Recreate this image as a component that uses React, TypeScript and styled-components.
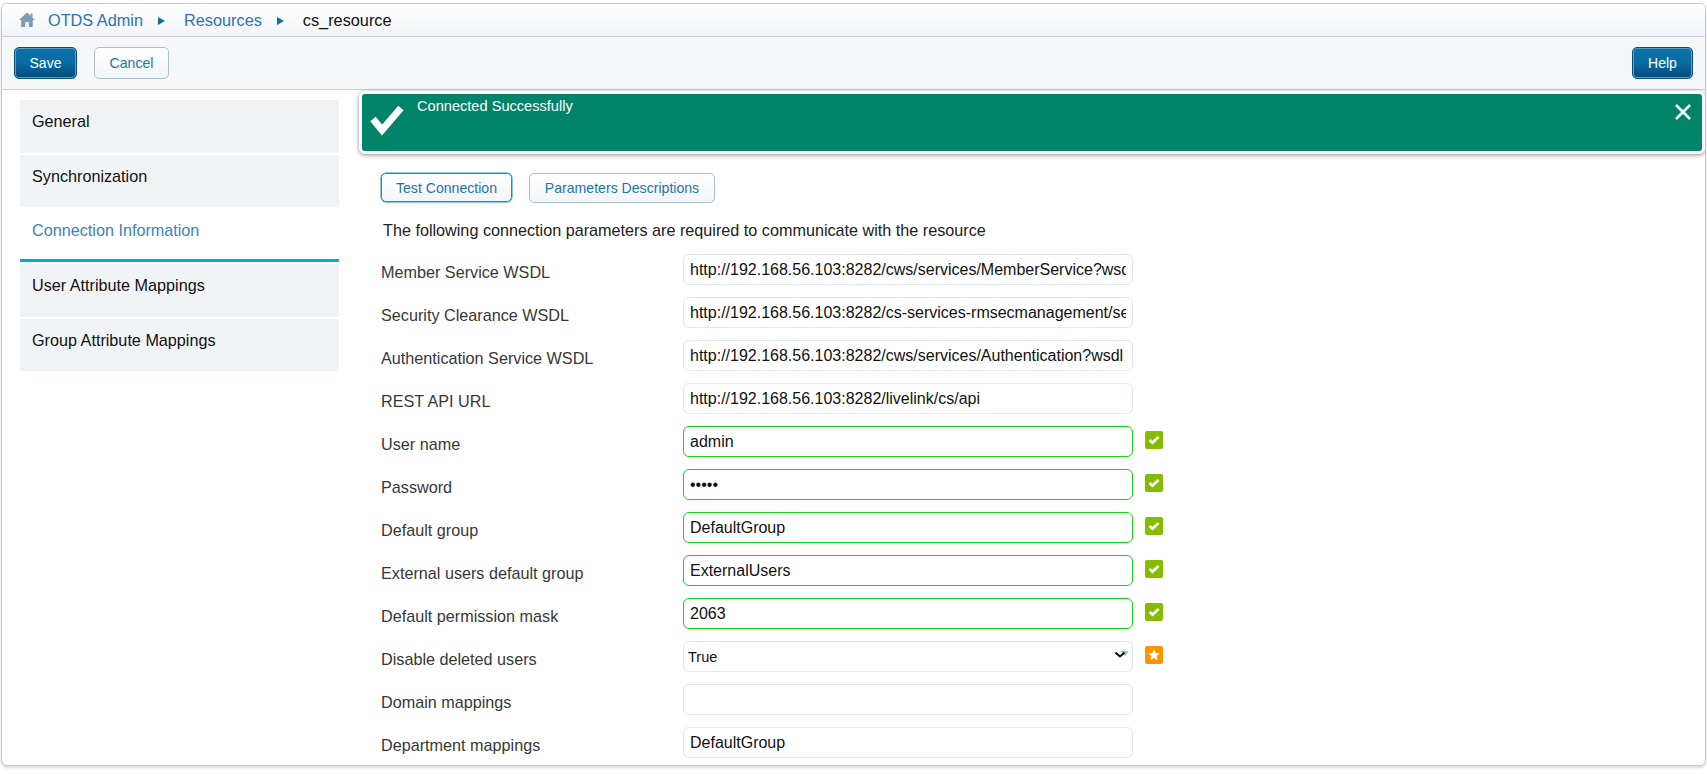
import React from "react";
import styled, {createGlobalStyle} from "styled-components";

const GlobalStyle = createGlobalStyle`
  html, body {
    margin: 0;
    padding: 0;
    height: 100%;
    background: #ffffff;
    font-family: "Liberation Sans", Arial, sans-serif;
  }
  * {
    box-sizing: border-box;
  }
`;

const Frame = styled.div`
  overflow: hidden;
  height: 763px;
  margin: 3px 1px 0 1px;

  background: #ffffff;
  border: 1px solid #bccbd6;
  border-radius: 6px;
  box-shadow: 0 2px 3px rgba(120, 140, 160, .3);
`;
const Breadcrumb = styled.div`
  display: flex;
  align-items: center;
  height: 33px;
  padding: 0 0 0 17px;

  font-size: 16.3px;

  background: linear-gradient(#ffffff, #f1f4f7);
  border-bottom: 1px solid #c6d3dc;
`;
const HomeIcon = styled.svg`
  flex: none;
  margin: -2px 13px 0 0;
`;
const Crumb = styled.span<{ $current?: boolean }>`
  color: ${p => p.$current ? "#111111" : "#2e73b0"};
`;
const Sep = styled.span`
  width: 0;
  height: 0;
  margin: 1px 19px 0 15px;

  border-left: 7px solid #0f6ea6;
  border-top: 4px solid transparent;
  border-bottom: 4px solid transparent;
`;
const Toolbar = styled.div`
  display: flex;
  align-items: center;
  justify-content: space-between;
  height: 53px;
  padding: 0 12px 0 12px;

  background: #f5f7f9;
  border-bottom: 1px solid #c6d3dc;
`;
const ToolGroup = styled.div`
  display: flex;
  gap: 17px;
`;
const PrimaryButton = styled.button<{ $width: number }>`
  width: ${p => p.$width}px;
  height: 32px;
  padding: 0;

  color: #ffffff;
  font-family: inherit;
  font-size: 14px;

  background: linear-gradient(#0a72ab 0%, #0a6ba3 50%, #024a78 100%);
  border: 1px solid #0b4f78;
  border-radius: 5px;
  box-shadow: inset 0 0 0 1px #5a9fc6;
`;
const GhostButton = styled.button<{ $width: number; $focused?: boolean; $tall?: boolean }>`
  width: ${p => p.$width}px;
  height: ${p => p.$tall ? "32px" : p.$focused ? "29px" : "30px"};
  padding: 0;

  color: #1f74ad;
  font-family: inherit;
  font-size: 14.1px;

  background: linear-gradient(#ffffff, #f2f5f8);
  border: 1px solid ${p => p.$focused ? "#1593cc" : "#a9c0d0"};
  border-radius: 5px;
  box-shadow: ${p => p.$focused ? "0 0 0 .5px #1593cc" : "none"};
`;
const Body = styled.div`
  display: flex;
  align-items: flex-start;
`;
const Nav = styled.nav`
  display: flex;
  flex-direction: column;
  flex: none;
  gap: 2px;
  width: 319px;
  margin: 10px 0 0 18px;
`;
const NavItem = styled.div<{ $active?: boolean }>`
  height: 52.67px;
  padding: 11px 0 0 12px;

  color: ${p => p.$active ? "#3f7fc1" : "#111111"};
  font-size: 16.2px;
  line-height: 20px;

  background: ${p => p.$active ? "#ffffff" : "#f1f4f7"};
  border-bottom: ${p => p.$active ? "3px solid #08a4dc" : "0"};
`;
const Main = styled.main`
  flex: 1;
  min-width: 0;
  margin: 1px 0 0 20px;
`;
const Banner = styled.div`
  position: relative;

  height: 63px;
  padding: 4px 0 0 55px;

  color: #ffffff;
  font-size: 14.6px;

  background: #008469;
  border: 3px solid #ffffff;
  border-radius: 6px;
  box-shadow: 0 1px 4px rgba(0, 0, 0, .45);
`;
const BannerCheck = styled.svg`
  position: absolute;
  top: 11px;
  left: 6px;
`;
const BannerClose = styled.svg`
  position: absolute;
  top: 9px;
  right: 10px;
`;
const Form = styled.div`
  padding: 19px 0 0 22px;
`;
const Actions = styled.div`
  display: flex;
  gap: 17px;
`;
const Intro = styled.p`
  margin: 19px 0 15px 2px;

  color: #222222;
  font-size: 16.2px;
  line-height: 17px;
`;
const Row = styled.div`
  display: flex;
  align-items: center;
  height: 31px;
  margin-bottom: 12px;
`;
const Label = styled.label`
  flex: none;
  width: 302px;
  padding-top: 6px;

  color: #383838;
  font-size: 16.2px;
`;
const Field = styled.input<{ $valid?: boolean }>`
  flex: none;
  width: 450px;
  height: 31px;
  padding: 0 6px;

  color: #111111;
  font-family: inherit;
  font-size: 16px;

  background: #ffffff;
  border: 1px solid ${p => p.$valid ? "#14d414" : "#dfe7ef"};
  border-radius: 6px;
  outline: none;
`;
const SelectWrap = styled.div`
  position: relative;

  flex: none;
  width: 450px;
  height: 31px;
`;
const Select = styled.select`
  width: 100%;
  height: 100%;
  padding: 0 0 0 4px;

  color: #111111;
  font-family: inherit;
  font-size: 14.5px;

  appearance: none;
  background: #ffffff;
  border: 1px solid #dfe7ef;
  border-radius: 6px;
  outline: none;
`;
const SelectArrow = styled.svg`
  position: absolute;
  top: 10px;
  right: 4px;

  pointer-events: none;
`;
const Badge = styled.span<{ $warn?: boolean }>`
  display: flex;
  align-items: center;
  justify-content: center;
  flex: none;
  width: 18px;
  height: 18px;
  margin: 0 0 3px 12px;

  background: ${p => p.$warn ? "#ff9300" : "#84bd00"};
  border-radius: 2px;
`;

type RowData = {
  label: string;
  value: string;
  valid?: boolean;
  type?: string;
}

const topRows: RowData[] = [
  {label: "Member Service WSDL", value: "http://192.168.56.103:8282/cws/services/MemberService?wsdl"},
  {label: "Security Clearance WSDL", value: "http://192.168.56.103:8282/cs-services-rmsecmanagement/services/RMSecurity?wsdl"},
  {label: "Authentication Service WSDL", value: "http://192.168.56.103:8282/cws/services/Authentication?wsdl"},
  {label: "REST API URL", value: "http://192.168.56.103:8282/livelink/cs/api"},
  {label: "User name", value: "admin", valid: true},
  {label: "Password", value: "admin", valid: true, type: "password"},
  {label: "Default group", value: "DefaultGroup", valid: true},
  {label: "External users default group", value: "ExternalUsers", valid: true},
  {label: "Default permission mask", value: "2063", valid: true},
];

const CheckBadge = () => (
  <Badge>
    <svg width="12" height="10" viewBox="0 0 12 10">
      <path d="M1.5 5 L4.5 7.6 L10.6 2" fill="none" stroke="#ffffff" strokeWidth="2.7"/>
    </svg>
  </Badge>
);

export default function App() {
  return (
    <>
      <GlobalStyle/>
      <Frame>
        <Breadcrumb>
          <HomeIcon width="16" height="15" viewBox="0 0 16 15">
            <path d="M8 0.5 L11.5 3.8 V1.5 H13.5 V5.7 L16 8 H13.8 V15 H9.8 V10 H6.2 V15 H2.2 V8 H0 Z" fill="#7d9cb3"/>
          </HomeIcon>
          <Crumb>OTDS Admin</Crumb>
          <Sep/>
          <Crumb>Resources</Crumb>
          <Sep/>
          <Crumb $current>cs_resource</Crumb>
        </Breadcrumb>
        <Toolbar>
          <ToolGroup>
            <PrimaryButton $width={63}>Save</PrimaryButton>
            <GhostButton $width={75} $tall>Cancel</GhostButton>
          </ToolGroup>
          <PrimaryButton $width={61}>Help</PrimaryButton>
        </Toolbar>
        <Body>
          <Nav>
            <NavItem>General</NavItem>
            <NavItem>Synchronization</NavItem>
            <NavItem $active>Connection Information</NavItem>
            <NavItem>User Attribute Mappings</NavItem>
            <NavItem>Group Attribute Mappings</NavItem>
          </Nav>
          <Main>
            <Banner>
              <BannerCheck width="38" height="32" viewBox="0 0 38 32">
                <path d="M5 14 L14 25 L33 3" fill="none" stroke="#ffffff" strokeWidth="7"/>
              </BannerCheck>
              <BannerClose width="18" height="18" viewBox="0 0 18 18">
                <path d="M2 2 L16 16 M16 2 L2 16" fill="none" stroke="#ffffff" strokeWidth="2.6"/>
              </BannerClose>
              Connected Successfully
            </Banner>
            <Form>
              <Actions>
                <GhostButton $focused $width={131}>Test Connection</GhostButton>
                <GhostButton $width={186}>Parameters Descriptions</GhostButton>
              </Actions>
              <Intro>The following connection parameters are required to communicate with the resource</Intro>
              {topRows.map(row => (
                <Row key={row.label}>
                  <Label>{row.label}</Label>
                  <Field readOnly type={row.type || "text"} value={row.value} $valid={row.valid}/>
                  {row.valid && <CheckBadge/>}
                </Row>
              ))}
              <Row>
                <Label>Disable deleted users</Label>
                <SelectWrap>
                  <Select defaultValue="True">
                    <option>True</option>
                    <option>False</option>
                  </Select>
                  <SelectArrow width="14" height="8" viewBox="0 0 14 8">
                    <path d="M5 0 H14 L10 5 Z" fill="#8cc4e6"/>
                    <path d="M0.5 1.5 L5 5.5 L9.5 1.5" fill="none" stroke="#111111" strokeWidth="2"/>
                  </SelectArrow>
                </SelectWrap>
                <Badge $warn>
                  <svg width="12" height="12" viewBox="0 0 12 12">
                    <path d="M6 .3 L7.7 4 L11.7 4.4 L8.7 7.1 L9.5 11.2 L6 9.1 L2.5 11.2 L3.3 7.1 L.3 4.4 L4.3 4 Z" fill="#ffffff"/>
                  </svg>
                </Badge>
              </Row>
              <Row>
                <Label>Domain mappings</Label>
                <Field readOnly value=""/>
              </Row>
              <Row>
                <Label>Department mappings</Label>
                <Field readOnly value="DefaultGroup"/>
              </Row>
            </Form>
          </Main>
        </Body>
      </Frame>
    </>
  );
}
